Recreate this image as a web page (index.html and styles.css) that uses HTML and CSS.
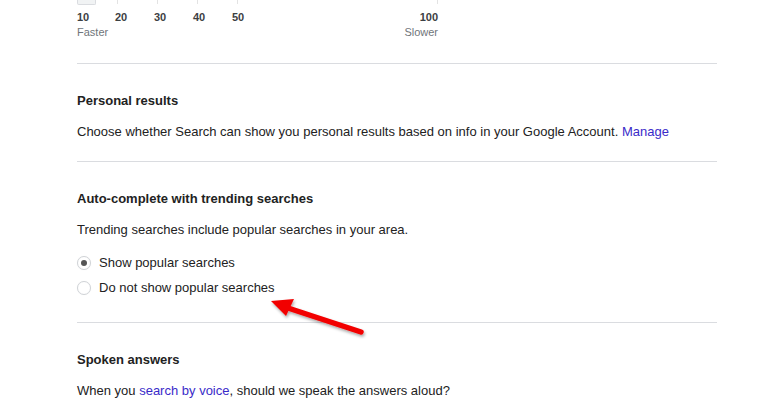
FILE: index.html
```html
<!DOCTYPE html>
<html>
<head>
<meta charset="utf-8">
<link rel="stylesheet" href="styles.css">
</head>
<body>
<div class="page">
  <div class="slider">
    <div class="track">
      <div class="thumb"></div>
      <div class="tick t1"></div>
      <div class="tick"></div>
      <div class="tick"></div>
      <div class="tick"></div>
      <div class="tick tlast"></div>
    </div>
    <div class="scale">
      <span>10</span><span>20</span><span>30</span><span>40</span><span>50</span><span class="end">100</span>
    </div>
    <div class="ends"><span>Faster</span><span>Slower</span></div>
  </div>

  <section class="sec first">
    <h2>Personal results</h2>
    <p>Choose whether Search can show you personal results based on info in your Google Account. <a href="#">Manage</a></p>
  </section>

  <section class="sec mid">
    <h2>Auto-complete with trending searches</h2>
    <p>Trending searches include popular searches in your area.</p>
    <div class="radios">
      <label class="radio"><span class="circle on"></span>Show popular searches</label>
      <label class="radio"><span class="circle"></span>Do not show popular searches</label>
    </div>
  </section>

  <section class="sec last">
    <h2>Spoken answers</h2>
    <p>When you <a href="#">search by voice</a>, should we speak the answers aloud?</p>
  </section>
</div>

<svg class="arrow" width="779" height="409" viewBox="0 0 779 409">
  <defs>
    <filter id="sh" x="-20%" y="-20%" width="140%" height="140%">
      <feDropShadow dx="1" dy="2" stdDeviation="1.5" flood-color="#000" flood-opacity="0.35"/>
    </filter>
  </defs>
  <g filter="url(#sh)" fill="#f20000">
    <polygon points="271,301 294,299 286,316"/>
    <line x1="288" y1="308" x2="361" y2="332" stroke="#f20000" stroke-width="5.5" stroke-linecap="round"/>
  </g>
</svg>
</body>
</html>
```

FILE: styles.css
```css
html, body {
  margin: 0;
  padding: 0;
  background: #fff;
}
body {
  font-family: "Liberation Sans", Arial, sans-serif;
  color: #222;
  width: 779px;
  height: 409px;
  overflow: hidden;
  position: relative;
}
.page {
  padding-left: 77px;
  width: 640px;
}
.slider {
  width: 361px;
}
.track {
  display: flex;
  height: 5px;
  align-items: flex-start;
}
.thumb {
  width: 17px;
  height: 4px;
  background: #f1f3f4;
  border: 1px solid #dadce0;
  border-top: none;
  border-radius: 0 0 2px 2px;
}
.tick {
  width: 1px;
  height: 4px;
  background: #e3e3e3;
  margin-left: 39px;
}
.tick.t1 {
  margin-left: 21px;
}
.tick.tlast {
  margin-left: 199px;
}
.scale {
  display: grid;
  grid-template-columns: 38px 39px 39px 39px 1fr 1fr;
  font-size: 11px;
  font-weight: bold;
  color: #3c4043;
  line-height: 14px;
  margin-top: 5px;
}
.scale .end {
  text-align: right;
}
.ends {
  display: flex;
  justify-content: space-between;
  font-size: 11px;
  color: #70757a;
  line-height: 14px;
  margin-top: 1px;
}
.sec {
  border-top: 1px solid #dadce0;
  padding: 29px 0 22px;
}
.sec.first {
  margin-top: 24px;
  padding-bottom: 21px;
}
.sec.mid {
  padding-bottom: 26px;
}
.sec h2 {
  margin: 0;
  font-size: 13px;
  font-weight: bold;
  line-height: 16px;
  color: #222;
}
.sec p {
  margin: 15px 0 0;
  font-size: 13px;
  line-height: 16px;
}
a {
  color: #3a2bc9;
  text-decoration: none;
}
.radios {
  display: flex;
  flex-direction: column;
  gap: 9px;
  margin-top: 17px;
}
.radio {
  display: flex;
  align-items: center;
  font-size: 13px;
  line-height: 16px;
  gap: 8px;
}
.circle {
  width: 12px;
  height: 12px;
  border: 1px solid #cfd2d6;
  border-radius: 50%;
  display: flex;
  align-items: center;
  justify-content: center;
  box-shadow: 0 0 1px rgba(0,0,0,0.08);
}
.circle.on::after {
  content: "";
  width: 6px;
  height: 6px;
  border-radius: 50%;
  background: #555;
}
.arrow {
  position: absolute;
  left: 0;
  top: 0;
  pointer-events: none;
}
```
